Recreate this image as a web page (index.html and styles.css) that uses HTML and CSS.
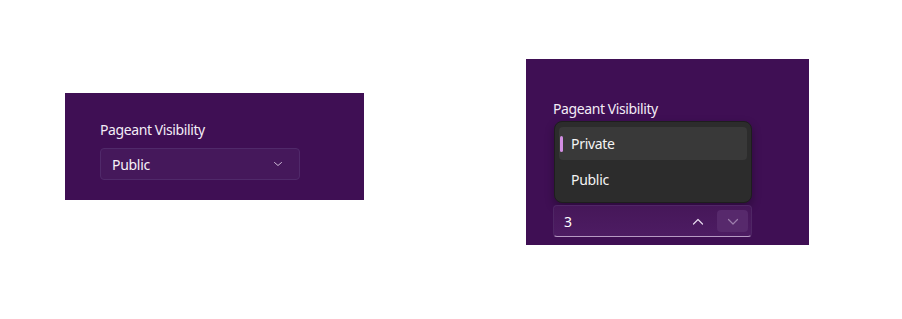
FILE: index.html
```html
<!DOCTYPE html>
<html>
<head>
<meta charset="utf-8">
<link rel="stylesheet" href="styles.css">
</head>
<body>
<div class="stage">
  <section class="panel panel-left">
    <div class="label">Pageant Visibility</div>
    <div class="combo">
      <span class="combo-text">Public</span>
      <svg class="chev" width="10" height="6" viewBox="0 0 10 6"><path d="M1.5 1.5 L5 4.5 L8.5 1.5" fill="none" stroke="#cdb9d6" stroke-width="1" stroke-linecap="round" stroke-linejoin="round"/></svg>
    </div>
  </section>
  <section class="panel panel-right">
    <div class="label">Pageant Visibility</div>
    <div class="popup">
      <div class="item selected"><span class="accent"></span>Private</div>
      <div class="item">Public</div>
    </div>
    <div class="numbox">
      <span class="num">3</span>
      <div class="spin">
        <div class="spin-btn">
          <svg width="12" height="7" viewBox="0 0 12 7"><path d="M1.5 6 L6 1.5 L10.5 6" fill="none" stroke="#e6d9ec" stroke-width="1.2" stroke-linecap="round" stroke-linejoin="round"/></svg>
        </div>
        <div class="spin-btn pressed">
          <svg width="12" height="7" viewBox="0 0 12 7"><path d="M1.5 1.5 L6 6 L10.5 1.5" fill="none" stroke="#9c7dab" stroke-width="1.2" stroke-linecap="round" stroke-linejoin="round"/></svg>
        </div>
      </div>
    </div>
  </section>
</div>
</body>
</html>
```
FILE: styles.css
```css
html, body {
  margin: 0;
  padding: 0;
  background: #ffffff;
}
body {
  width: 902px;
  height: 319px;
  overflow: hidden;
  font-family: "Noto Sans", "Open Sans", sans-serif;
  font-size: 14px;
  color: #ffffff;
}
.stage {
  display: flex;
  align-items: flex-start;
  padding-left: 65px;
}
.panel {
  background: #3f0f54;
  box-sizing: border-box;
  display: flex;
  flex-direction: column;
}
.panel-left {
  margin-top: 93px;
  width: 299px;
  height: 107px;
  padding: 27px 0 0 35px;
}
.panel-right {
  margin-top: 59px;
  margin-left: 162px;
  width: 283px;
  height: 186px;
  padding: 40px 0 0 27px;
}
.label {
  line-height: 20px;
  height: 20px;
  color: #f3ecf6;
  letter-spacing: -0.4px;
}
.panel-left .label {
  margin-bottom: 8px;
}
.panel-right .label {
  margin-bottom: 2px;
}
.combo {
  box-sizing: border-box;
  width: 200px;
  height: 32px;
  border: 1px solid #50296a;
  border-radius: 4px;
  background: #45185b;
  display: flex;
  align-items: center;
  justify-content: space-between;
  padding: 0 16px 0 11px;
}
.combo-text {
  color: #f7f2f9;
  letter-spacing: -0.3px;
}
.chev {
  display: block;
}
.popup {
  box-sizing: border-box;
  width: 198px;
  height: 82px;
  margin-left: 1px;
  background: #2c2c2c;
  border: 1px solid #1e1e1e;
  border-radius: 8px;
  padding: 4px 0;
  box-shadow: 0 4px 10px rgba(0, 0, 0, 0.3);
  display: flex;
  flex-direction: column;
}
.item {
  position: relative;
  height: 33px;
  margin: 1px 4px 2px 4px;
  border-radius: 4px;
  padding-left: 12px;
  display: flex;
  align-items: center;
  color: #f4f4f4;
  letter-spacing: -0.3px;
}
.item.selected {
  background: #393939;
}
.accent {
  position: absolute;
  left: 1px;
  top: 9px;
  width: 3px;
  height: 16px;
  border-radius: 2px;
  background: #d28ee2;
}
.numbox {
  box-sizing: border-box;
  width: 199px;
  height: 32px;
  margin-top: 2px;
  border-radius: 4px;
  background: linear-gradient(#461759, #4d1c63);
  border: 1px solid #4f2665;
  border-bottom: 1px solid #b69ac3;
  display: flex;
  align-items: center;
  justify-content: space-between;
  padding: 0 3px 0 10px;
}
.num {
  color: #ffffff;
}
.spin {
  display: flex;
  gap: 4px;
}
.spin-btn {
  width: 31px;
  height: 22px;
  border-radius: 4px;
  display: flex;
  align-items: center;
  justify-content: center;
}
.spin-btn.pressed {
  background: #57296c;
}
```
